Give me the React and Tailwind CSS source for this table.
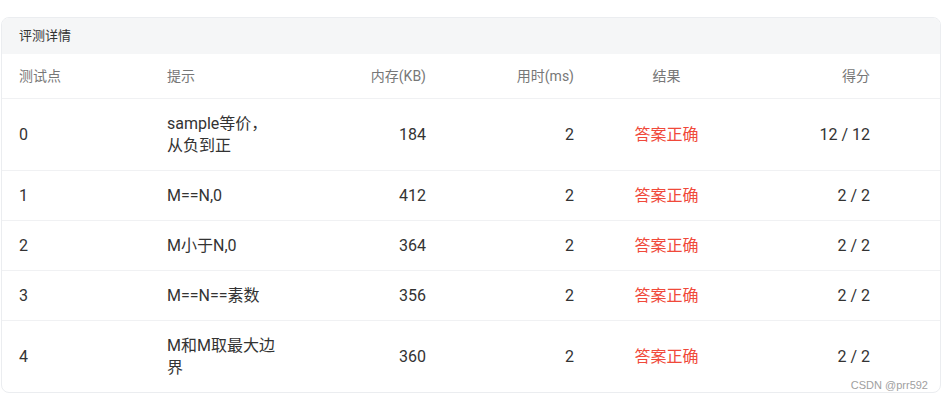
import React from 'react';

const rows = [
  { id: '0', hint: 'sample等价，从负到正', mem: '184', time: '2', result: '答案正确', score: '12 / 12' },
  { id: '1', hint: 'M==N,0', mem: '412', time: '2', result: '答案正确', score: '2 / 2' },
  { id: '2', hint: 'M小于N,0', mem: '364', time: '2', result: '答案正确', score: '2 / 2' },
  { id: '3', hint: 'M==N==素数', mem: '356', time: '2', result: '答案正确', score: '2 / 2' },
  { id: '4', hint: 'M和M取最大边界', mem: '360', time: '2', result: '答案正确', score: '2 / 2' },
];

const font = { fontFamily: 'Roboto, "Noto Sans CJK SC", sans-serif' };

export default function App() {
  return (
    <div className="relative w-[942px] h-[401px] bg-white pt-[17px] pl-[1px]" style={font}>
      <div className="w-[940px] rounded-[8px] border border-[#ebedf0] overflow-hidden bg-white">
        {/* title bar */}
        <div className="h-[36px] bg-[#f5f6f7] flex items-center pl-[17px] text-[13px] text-[#333]">
          评测详情
        </div>

        <table className="w-full table-fixed border-collapse">
          <colgroup>
            <col className="w-[148px]" />
            <col className="w-[148px]" />
            <col className="w-[148px]" />
            <col className="w-[148px]" />
            <col className="w-[148px]" />
            <col className="w-[148px]" />
            <col />
          </colgroup>
          <thead>
            <tr className="border-b border-[#f0f1f3] text-[14px] text-[#777] leading-[22px]">
              <th className="font-normal text-left pl-[17px] pr-[20px] py-[11px]">测试点</th>
              <th className="font-normal text-left pl-[17px] pr-[20px] py-[11px]">提示</th>
              <th className="font-normal text-right pl-[17px] pr-[20px] py-[11px]">内存(KB)</th>
              <th className="font-normal text-right pl-[17px] pr-[20px] py-[11px]">用时(ms)</th>
              <th className="font-normal text-center pl-[17px] pr-[20px] py-[11px]">结果</th>
              <th className="font-normal text-right pl-[17px] pr-[20px] py-[11px]">得分</th>
              <th />
            </tr>
          </thead>
          <tbody>
            {rows.map((r, i) => (
              <tr
                key={r.id}
                className={`text-[16px] text-[#333] leading-[22px] ${i < rows.length - 1 ? 'border-b border-[#f0f1f3]' : ''}`}
              >
                <td className="pl-[17px] pr-[20px] pt-[14px] pb-[13px] text-left">{r.id}</td>
                <td className="pl-[17px] pr-[18px] pt-[14px] pb-[13px] text-left">{r.hint}</td>
                <td className="pl-[17px] pr-[20px] pt-[14px] pb-[13px] text-right">{r.mem}</td>
                <td className="pl-[17px] pr-[20px] pt-[14px] pb-[13px] text-right">{r.time}</td>
                <td className="pl-[17px] pr-[20px] pt-[14px] pb-[13px] text-center text-[#f0493a]">{r.result}</td>
                <td className="pl-[17px] pr-[20px] pt-[14px] pb-[13px] text-right">{r.score}</td>
                <td />
              </tr>
            ))}
          </tbody>
        </table>
      </div>

      {/* watermark */}
      <div
        className="absolute right-[14px] top-[378px] text-[11px] text-[#a0a0a0] leading-[14px]"
        style={{ fontFamily: '"Liberation Sans", Arial, sans-serif' }}
      >
        CSDN @prr592
      </div>
    </div>
  );
}
